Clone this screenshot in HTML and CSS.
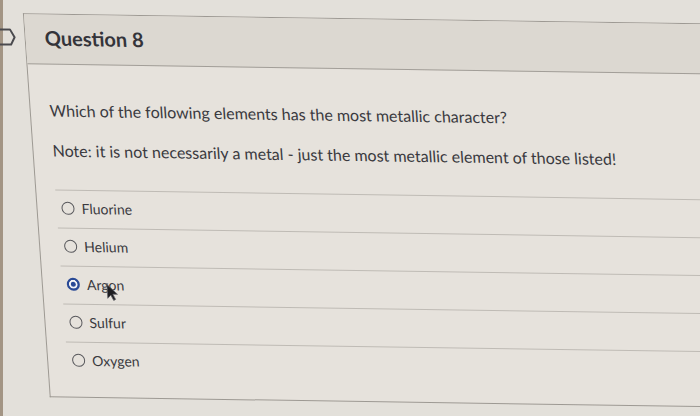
FILE: index.html
```html
<!DOCTYPE html>
<html lang="en">
<head>
<meta charset="utf-8">
<title>Question 8</title>
<link rel="stylesheet" href="styles.css">
</head>
<body>
<div class="page">
  <div class="gutter">
    <svg class="flag" viewBox="0 0 18 18" aria-hidden="true">
      <path d="M0 1.5 H12 L16 9 L12 16.5 H0" fill="none" stroke="#4a4a4e" stroke-width="2" stroke-linejoin="round"/>
    </svg>
  </div>
  <div class="card">
    <div class="card-header">
      <h2 class="title">Question 8</h2>
    </div>
    <div class="card-body">
      <p class="question">Which of the following elements has the most metallic character?</p>
      <p class="note">Note: it is not necessarily a metal - just the most metallic element of those listed!</p>
      <ul class="answers">
        <li class="answer"><span class="radio"></span><span class="label">Fluorine</span></li>
        <li class="answer"><span class="radio"></span><span class="label">Helium</span></li>
        <li class="answer"><span class="radio checked"></span><span class="label">Argon</span>
          <svg class="cursor" viewBox="0 0 12 18" aria-hidden="true">
            <path d="M1 1 L1 15 L4.3 11.8 L6.8 17 L8.8 16 L6.4 10.9 L11 10.9 Z" fill="#1e1e22" stroke="#6b6b70" stroke-width="0.8" stroke-linejoin="round"/>
          </svg>
        </li>
        <li class="answer"><span class="radio"></span><span class="label">Sulfur</span></li>
        <li class="answer"><span class="radio"></span><span class="label">Oxygen</span></li>
      </ul>
    </div>
  </div>
</div>
</body>
</html>
```

FILE: styles.css
```css
html, body {
  margin: 0;
  height: 100%;
  overflow: hidden;
}

body {
  background: linear-gradient(to right, #a39584 0, #a39584 3px, #e3e0da 3px);
  font-family: Lato, "Liberation Sans", sans-serif;
  color: #3a3a3f;
}

.page {
  display: flex;
  align-items: flex-start;
  width: 700px;
  padding-top: 13px;
  transform: skew(4deg, 0.85deg);
  transform-origin: 0 0;
}

.gutter {
  flex: none;
  width: 22px;
}

.flag {
  display: block;
  width: 18px;
  height: 18px;
  margin: 15px 0 0 -4px;
}

.card {
  flex: 1;
  min-width: 0;
  box-sizing: border-box;
  border: 1px solid #9d9993;
  border-right: 0;
  background: #e6e2dc;
}

.card-header {
  height: 50px;
  box-sizing: border-box;
  display: flex;
  align-items: center;
  padding: 0 0 4px 19px;
  border-bottom: 1px solid #a29e98;
  background: #dcd8d1;
}

.title {
  margin: 0;
  font-size: 20px;
  font-weight: 700;
  line-height: 1.2;
  color: #34343a;
}

.card-body {
  padding: 34px 0 17px 19px;
}

.question,
.note {
  margin: 0 0 16px;
  font-size: 16px;
  line-height: 24px;
  color: #3a3a3f;
}

.note {
  margin-bottom: 27px;
}

.answers {
  list-style: none;
  margin: 0;
  padding: 0;
}

.answer {
  position: relative;
  display: flex;
  align-items: center;
  height: 38px;
  box-sizing: border-box;
  padding: 0 0 3px 5px;
  border-top: 1px solid #bfbbb5;
}

.radio {
  flex: none;
  width: 13px;
  height: 13px;
  box-sizing: border-box;
  border: 1.6px solid #58585c;
  border-radius: 50%;
}

.radio.checked {
  border: 2px solid #2a4a96;
  background: #2a4a96;
  box-shadow: inset 0 0 0 2px #f3f3f5;
}

.label {
  margin-left: 7px;
  font-size: 14px;
  color: #3a3a3f;
}

.cursor {
  position: absolute;
  left: 44px;
  top: 16px;
  width: 12px;
  height: 18px;
}
```
